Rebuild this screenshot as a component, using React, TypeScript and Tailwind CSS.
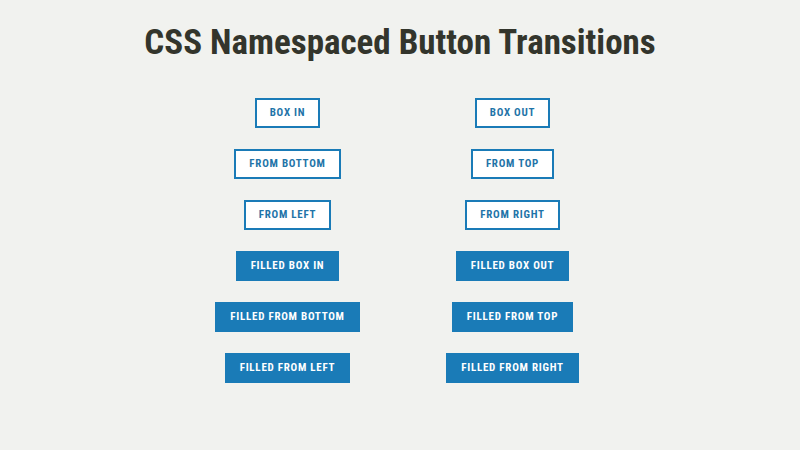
const left = [
  { label: "Box In", filled: false },
  { label: "From Bottom", filled: false },
  { label: "From Left", filled: false },
  { label: "Filled Box In", filled: true },
  { label: "Filled From Bottom", filled: true },
  { label: "Filled From Left", filled: true },
];

const right = [
  { label: "Box Out", filled: false },
  { label: "From Top", filled: false },
  { label: "From Right", filled: false },
  { label: "Filled Box Out", filled: true },
  { label: "Filled From Top", filled: true },
  { label: "Filled From Right", filled: true },
];

function TransitionButton({ label, filled }: { label: string; filled: boolean }) {
  return (
    <button
      className={
        filled
          ? "h-[30px] border-2 border-[#1a7bb7] bg-[#1a7bb7] px-[13px] text-[11px] font-bold uppercase tracking-[0.75px] text-white"
          : "h-[30px] border-2 border-[#1a7bb7] bg-white px-[13px] text-[11px] font-bold uppercase tracking-[0.75px] text-[#1f74a8]"
      }
    >
      {label}
    </button>
  );
}

export default function App() {
  return (
    <div className="h-[450px] w-[800px] bg-[#f1f2ef] font-['Roboto_Condensed',Roboto,sans-serif]">
      <h1 className="pt-[22px] text-center text-[35px] leading-[42px] font-bold text-[#33352c]">
        CSS Namespaced Button Transitions
      </h1>

      <div className="mx-auto mt-[34px] grid w-[450px] grid-cols-2">
        {[left, right].map((col, i) => (
          <div key={i} className="flex flex-col items-center gap-[21px]">
            {col.map((b) => (
              <TransitionButton key={b.label} label={b.label} filled={b.filled} />
            ))}
          </div>
        ))}
      </div>
    </div>
  );
}
